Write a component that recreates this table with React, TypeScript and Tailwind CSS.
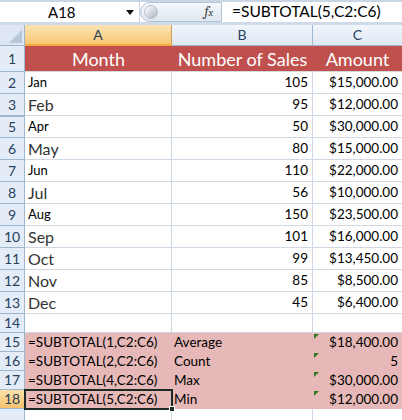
import { Fragment } from 'react'

type Row = { n: number; month: string; sales: number; amount: string; big: boolean }

const rows: Row[] = [
  { n: 2, month: 'Jan', sales: 105, amount: '$15,000.00', big: false },
  { n: 3, month: 'Feb', sales: 95, amount: '$12,000.00', big: true },
  { n: 5, month: 'Apr', sales: 50, amount: '$30,000.00', big: false },
  { n: 6, month: 'May', sales: 80, amount: '$15,000.00', big: true },
  { n: 7, month: 'Jun', sales: 110, amount: '$22,000.00', big: false },
  { n: 8, month: 'Jul', sales: 56, amount: '$10,000.00', big: true },
  { n: 9, month: 'Aug', sales: 150, amount: '$23,500.00', big: false },
  { n: 10, month: 'Sep', sales: 101, amount: '$16,000.00', big: true },
  { n: 11, month: 'Oct', sales: 99, amount: '$13,450.00', big: true },
  { n: 12, month: 'Nov', sales: 85, amount: '$8,500.00', big: true },
  { n: 13, month: 'Dec', sales: 45, amount: '$6,400.00', big: true },
]

const totals = [
  { n: 15, f: '=SUBTOTAL(1,C2:C6)', label: 'Average', value: '$18,400.00' },
  { n: 16, f: '=SUBTOTAL(2,C2:C6)', label: 'Count', value: '5' },
  { n: 17, f: '=SUBTOTAL(4,C2:C6)', label: 'Max', value: '$30,000.00' },
  { n: 18, f: '=SUBTOTAL(5,C2:C6)', label: 'Min', value: '$12,000.00' },
]

const font = { fontFamily: 'Lato, "Open Sans", sans-serif' }

function RowHead({ n, active, topLine }: { n: number; active?: boolean; topLine?: boolean }) {
  return (
    <div
      className={`flex items-center justify-center border-b border-r border-[#9eb6ce] text-[14px] leading-none text-[#27415f] ${
        active ? 'bg-gradient-to-b from-[#fbe0a8] to-[#f6c16e]' : 'bg-[#e4ecf7]'
      } ${topLine ? 'border-t' : ''}`}
    >
      {n}
    </div>
  )
}

export default function App() {
  return (
    <div className="h-[420px] w-[402px] overflow-hidden bg-white leading-none" style={font}>
      {/* formula bar */}
      <div className="flex h-[22px] items-stretch border-t-2 border-[#c9d5e3] bg-white">
        <div className="relative flex w-[140px] items-center border-r border-[#c9d5e3]">
          <span className="ml-[48px] text-[15px] text-black">A18</span>
          <svg className="absolute left-[126px] top-[8px]" width="8" height="5" viewBox="0 0 8 5">
            <path d="M0 0h8L4 5z" fill="#111" />
          </svg>
        </div>
        <div className="flex w-[82px] items-center rounded-l-full border border-[#b3c3d6] bg-gradient-to-b from-[#f4f7fb] to-[#dfe7f1]">
          <div className="ml-[3px] h-[14px] w-[14px] rounded-full border border-[#b9c3cf] bg-gradient-to-br from-[#ffffff] to-[#aab4c0]" />
          <span className="ml-auto mr-[8px] font-serif text-[14px] italic text-[#444]">
            f<span className="text-[10px]">x</span>
          </span>
        </div>
        <div className="flex flex-1 items-center pl-[10px] text-[15.5px] text-black">=SUBTOTAL(5,C2:C6)</div>
      </div>
      <div className="h-[3px] bg-[#cfdbe9]" />

      <div className="grid grid-cols-[25px_147px_141px_89px] grid-rows-[21px_26px_repeat(11,22px)_repeat(6,19px)]">
        {/* column headers */}
        <div className="relative border-b border-r border-[#9eb6ce] bg-[#dde6f2]">
          <svg className="absolute bottom-[2px] right-[2px]" width="13" height="13" viewBox="0 0 13 13">
            <path d="M13 0V13H0z" fill="#b5c6da" />
          </svg>
        </div>
        <div className="flex items-center justify-center border-b-2 border-r border-b-[#f2a93b] border-r-[#c9a35d] bg-gradient-to-b from-[#fbe3b3] to-[#f7c772] text-[14px] text-[#27415f]">
          A
        </div>
        <div className="flex items-center justify-center border-b border-r border-[#9eb6ce] bg-gradient-to-b from-[#f1f5fb] to-[#dfe8f3] text-[14px] text-[#27415f]">
          B
        </div>
        <div className="flex items-center justify-center border-b border-[#9eb6ce] bg-gradient-to-b from-[#f1f5fb] to-[#dfe8f3] text-[14px] text-[#27415f]">
          C
        </div>

        {/* row 1 */}
        <RowHead n={1} />
        <div className="flex items-center justify-center border-b border-[#d6d9de] bg-[#c0504d] text-[18px] text-white">Month</div>
        <div className="flex items-center justify-center border-b border-[#d6d9de] bg-[#c0504d] text-[18px] text-white">
          Number of Sales
        </div>
        <div className="flex items-center justify-center border-b border-[#d6d9de] bg-[#c0504d] text-[18px] text-white">Amount</div>

        {rows.map((r) => (
          <Fragment key={r.n}>
            <RowHead n={r.n} topLine={r.n === 5} />
            <div
              className={`flex items-center border-b border-r border-[#d0d7e5] pl-[3px] ${
                r.big ? 'text-[16px] text-[#333]' : 'text-[13px] text-black'
              }`}
            >
              {r.month}
            </div>
            <div className="flex items-center justify-end border-b border-r border-[#d0d7e5] pr-[4px] text-[13.5px] text-black">
              {r.sales}
            </div>
            <div className="flex items-center justify-end border-b border-[#d0d7e5] pr-[4px] text-[13.5px] text-black">
              {r.amount}
            </div>
          </Fragment>
        ))}

        {/* row 14 */}
        <RowHead n={14} />
        <div className="border-b border-r border-[#d0d7e5]" />
        <div className="border-b border-r border-[#d0d7e5]" />
        <div className="border-b border-[#d0d7e5]" />

        {totals.map((t) => (
          <Fragment key={t.n}>
            <RowHead n={t.n} active={t.n === 18} />
            <div
              className={`relative flex items-center bg-[#e6b8b7] pl-[3px] text-[13.5px] text-black ${
                t.n === 18 ? 'outline outline-2 -outline-offset-1 outline-[#1e2b24]' : ''
              }`}
            >
              {t.f}
              {t.n === 18 ? (
                <div className="absolute -bottom-[3px] -right-[3px] z-10 h-[6px] w-[6px] border border-white bg-[#1e2b24]" />
              ) : null}
            </div>
            <div className="flex items-center bg-[#e6b8b7] pl-[2px] text-[13.5px] text-black">{t.label}</div>
            <div className="relative flex items-center justify-end bg-[#e6b8b7] pr-[4px] text-[13.5px] text-black">
              <svg className="absolute left-[1px] top-[1px]" width="5" height="5" viewBox="0 0 5 5">
                <path d="M0 0h5L0 5z" fill="#2f7a1f" />
              </svg>
              {t.value}
            </div>
          </Fragment>
        ))}

        {/* row 19 */}
        <div className="border-r border-[#9eb6ce] bg-[#e4ecf7]" />
        <div className="border-r border-[#d0d7e5]" />
        <div className="border-r border-[#d0d7e5]" />
        <div />
      </div>
    </div>
  )
}
